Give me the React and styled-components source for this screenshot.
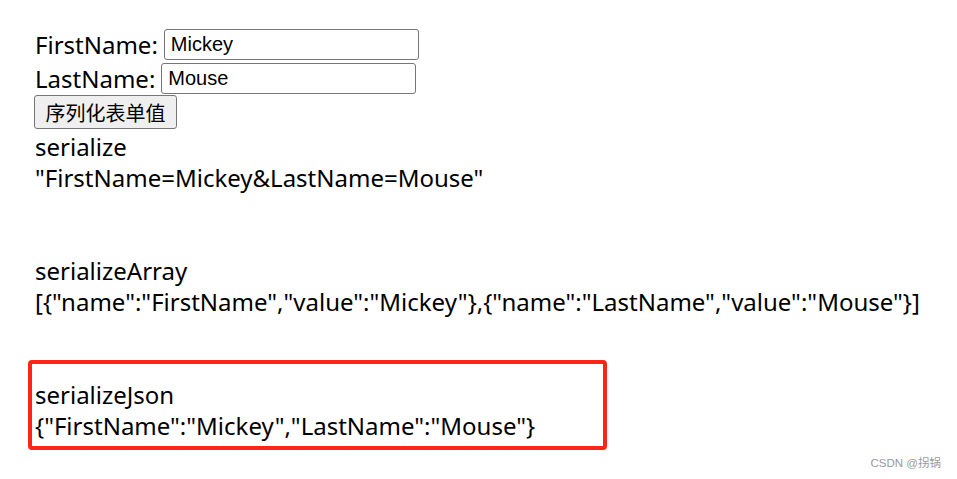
import React from 'react';
import styled, { createGlobalStyle } from 'styled-components';

const GlobalStyle = createGlobalStyle`
    body {
        margin: 0;
        background: #ffffff;
    }
`;

export default function App () {
    return (
        <Page>
            <GlobalStyle />
            <Form>
                <Row>
                    <Label>FirstName:</Label>
                    <Input defaultValue="Mickey" />
                </Row>
                <Row>
                    <Label>LastName:</Label>
                    <Input defaultValue="Mouse" />
                </Row>
                <Button type="button">序列化表单值</Button>
            </Form>
            <Output>
                <Line>serialize</Line>
                <Line>"FirstName=Mickey&amp;LastName=Mouse"</Line>
                <Gap />
                <Line>serializeArray</Line>
                <Line>[{'{'}"name":"FirstName","value":"Mickey"{'}'},{'{'}"name":"LastName","value":"Mouse"{'}'}]</Line>
                <Gap />
                <Highlight>
                    <Line>serializeJson</Line>
                    <Line>{'{'}"FirstName":"Mickey","LastName":"Mouse"{'}'}</Line>
                </Highlight>
            </Output>
            <Watermark>CSDN @拐锅</Watermark>
        </Page>
    );
}

const Page = styled.div`
    position: relative;
    height: 479px;
    padding: 27px 0 0 35px;
    box-sizing: border-box;
    font-family: "Noto Sans", "Noto Sans CJK SC", sans-serif;
    font-size: 24px;
    color: #000;
`;
const Form = styled.div`
    display: flex;
    flex-direction: column;
    align-items: flex-start;
`;
const Row = styled.div`
    display: flex;
    align-items: center;
    height: 34px;
`;
const Label = styled.span`
    margin-right: 6px;
    line-height: 31px;
`;
const Input = styled.input`
    box-sizing: border-box;
    width: 255px;
    height: 31px;
    padding: 0 6px;
    border: 1px solid #767676;
    border-radius: 3px;
    font-family: "Liberation Sans", Arial, sans-serif;
    font-size: 20px;
    color: #000;
    outline: none;
`;
const Button = styled.button`
    box-sizing: border-box;
    width: 143px;
    height: 34px;
    margin: 0 0 0 -1px;
    padding: 0;
    border: 1px solid #767676;
    border-radius: 3px;
    background: #efefef;
    font-family: "Noto Sans CJK SC", sans-serif;
    font-size: 20px;
    color: #000;
`;
const Output = styled.div`
    margin-top: 2px;
`;
const Line = styled.div`
    height: 31px;
    line-height: 31px;
    white-space: nowrap;
`;
const Gap = styled.div`
    height: 62px;
`;
const Highlight = styled.div`
    position: relative;
    &::before {
        content: '';
        position: absolute;
        left: -7px;
        top: -19px;
        width: 579px;
        height: 90px;
        box-sizing: border-box;
        border: 4px solid #ff2418;
        border-radius: 4px;
    }
`;
const Watermark = styled.div`
    position: absolute;
    right: 16px;
    bottom: 9px;
    font-family: "Liberation Sans", "Noto Sans CJK SC", sans-serif;
    font-size: 11.5px;
    color: #999;
`;
